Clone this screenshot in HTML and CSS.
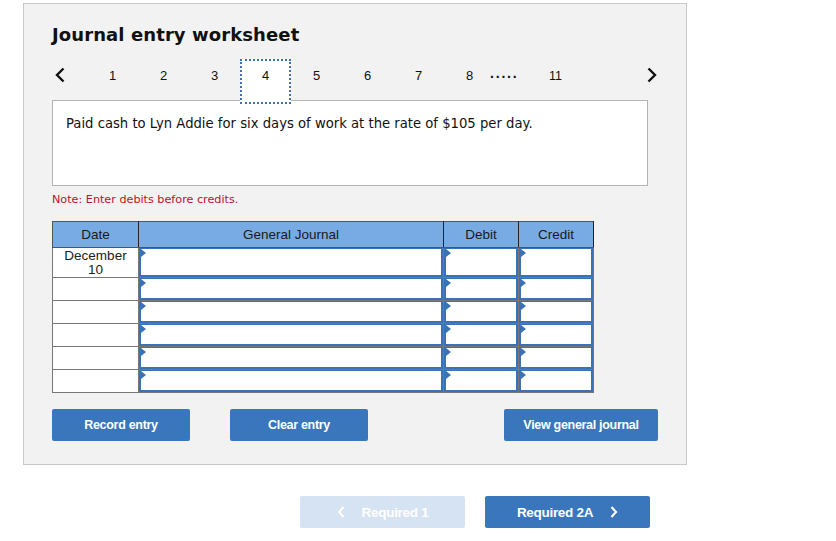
FILE: index.html
```html
<!DOCTYPE html>
<html>
<head>
<meta charset="utf-8">
<link rel="stylesheet" href="styles.css">
</head>
<body>
<div class="panel">
  <h1 class="title">Journal entry worksheet</h1>
  <div class="nav">
    <div class="nav-arrow prev"><svg width="12" height="16" viewBox="0 0 12 16"><path d="M9.5 1.5 L3 8 L9.5 14.5" fill="none" stroke="#111" stroke-width="2.4"/></svg></div>
    <div class="nav-item">1</div>
    <div class="nav-item">2</div>
    <div class="nav-item">3</div>
    <div class="nav-item active">4</div>
    <div class="nav-item">5</div>
    <div class="nav-item">6</div>
    <div class="nav-item">7</div>
    <div class="nav-item">8</div>
    <div class="nav-dots">.....</div>
    <div class="nav-item eleven">11</div>
    <div class="nav-arrow next"><svg width="12" height="16" viewBox="0 0 12 16"><path d="M2.5 1.5 L9 8 L2.5 14.5" fill="none" stroke="#111" stroke-width="2.4"/></svg></div>
  </div>
  <div class="desc">Paid cash to Lyn Addie for six days of work at the rate of $105 per day.</div>
  <p class="note">Note: Enter debits before credits.</p>
  <table class="journal">
    <thead>
      <tr><th class="c-date">Date</th><th class="c-gj">General Journal</th><th class="c-num">Debit</th><th class="c-num">Credit</th></tr>
    </thead>
    <tbody>
      <tr class="first"><td class="date">December<br>10</td><td><div class="inp"></div></td><td><div class="inp"></div></td><td><div class="inp"></div></td></tr>
      <tr><td class="date"></td><td><div class="inp"></div></td><td><div class="inp"></div></td><td><div class="inp"></div></td></tr>
      <tr><td class="date"></td><td><div class="inp"></div></td><td><div class="inp"></div></td><td><div class="inp"></div></td></tr>
      <tr><td class="date"></td><td><div class="inp"></div></td><td><div class="inp"></div></td><td><div class="inp"></div></td></tr>
      <tr><td class="date"></td><td><div class="inp"></div></td><td><div class="inp"></div></td><td><div class="inp"></div></td></tr>
      <tr><td class="date"></td><td><div class="inp"></div></td><td><div class="inp"></div></td><td><div class="inp"></div></td></tr>
    </tbody>
  </table>
  <div class="actions">
    <button class="btn record">Record entry</button>
    <button class="btn clear">Clear entry</button>
    <button class="btn view">View general journal</button>
  </div>
</div>
<div class="bottom">
  <button class="req disabled"><svg class="chev" width="8" height="12" viewBox="0 0 8 12"><path d="M6.5 1 L2 6 L6.5 11" fill="none" stroke="#fff" stroke-width="2.2"/></svg>Required 1</button>
  <button class="req primary">Required 2A<svg class="chev r" width="8" height="12" viewBox="0 0 8 12"><path d="M1.5 1 L6 6 L1.5 11" fill="none" stroke="#fff" stroke-width="2.2"/></svg></button>
</div>
</body>
</html>
```

FILE: styles.css
```css
* { box-sizing: border-box; }
html, body { margin: 0; padding: 0; background: #fff; }
body { font-family: "Liberation Sans", Arial, sans-serif; color: #111; }

.panel {
  margin: 3px 0 0 23px;
  width: 664px;
  height: 462px;
  background: #f2f2f2;
  border: 1px solid #c8c8c8;
  padding: 0 0 0 28px;
}

.title {
  font-family: "DejaVu Sans", Verdana, sans-serif;
  font-weight: bold;
  font-size: 18px;
  line-height: 24px;
  margin: 0;
  padding-top: 19px;
  height: 55px;
  letter-spacing: 0.1px;
}

.nav {
  display: flex;
  align-items: flex-start;
  height: 41px;
  width: 606px;
  font-size: 13px;
}
.nav-arrow { height: 41px; padding-top: 8px; }
.nav-arrow.prev { width: 35px; padding-left: 2px; }
.nav-arrow.next { margin-left: auto; }
.nav-item {
  width: 51px;
  height: 41px;
  text-align: center;
  padding-top: 9px;
  line-height: 16px;
}
.nav-item.active {
  height: 45px;
  margin-bottom: -4px;
  background: #fff;
  border: 2px dotted #3a72b5;
  padding-top: 7px;
  position: relative;
  z-index: 1;
}
.nav-dots {
  width: 25px;
  margin-left: -5px;
  padding-top: 6px;
  letter-spacing: 1.8px;
  font-size: 14px;
  line-height: 16px;
  font-weight: bold;
}
.nav-item.eleven { margin-left: 15px; font-size: 12.5px; }

.desc {
  width: 596px;
  height: 86px;
  background: #fff;
  border: 1px solid #b4b4b4;
  font-family: "DejaVu Sans", Verdana, sans-serif;
  font-size: 13.2px;
  padding: 15px 0 0 13px;
  line-height: 16px;
}

.note {
  margin: 0;
  padding-top: 7px;
  height: 35px;
  font-family: "DejaVu Sans", Verdana, sans-serif;
  font-size: 11.2px;
  line-height: 14px;
  color: #c0102a;
}

.journal {
  border-collapse: collapse;
  width: 541px;
  table-layout: fixed;
  font-size: 13.5px;
}
.journal th {
  background: #78abe3;
  font-weight: normal;
  color: #1a1a1a;
  height: 26px;
  border: 1px solid #555;
  border-right-color: #222;
  padding: 0;
  line-height: 16px;
}
.c-date { width: 86px; }
.c-gj { width: 305px; }
.c-num { width: 75px; }
.journal td {
  border: 1px solid #777;
  padding: 0;
  height: 23px;
  background: #fff;
  vertical-align: top;
}
.journal tr.first td { height: 30px; }
.journal td.date {
  text-align: center;
  font-size: 13.5px;
  line-height: 14px;
  padding-top: 1px;
  color: #222;
}
.inp {
  position: relative;
  height: 22px;
  border: 2px solid #3a72b5;
  border-top-width: 1px;
  background: #fff;
}
.journal tr.first td .inp { height: 29px; }
.inp::before {
  content: "";
  position: absolute;
  left: 0;
  top: 0;
  border-top: 4px solid transparent;
  border-bottom: 4px solid transparent;
  border-left: 5px solid #3a72b5;
}

.actions {
  display: flex;
  margin-top: 16px;
}
.btn {
  height: 32px;
  background: #3a76bb;
  color: #fff;
  border: none;
  border-radius: 2px;
  font-family: "Liberation Sans", Arial, sans-serif;
  font-weight: bold;
  font-size: 12.5px;
  padding: 0;
  letter-spacing: -0.3px;
}
.btn.record { width: 138px; }
.btn.clear { width: 138px; margin-left: 40px; }
.btn.view { width: 154px; margin-left: 136px; }

.bottom {
  display: flex;
  margin: 31px 0 0 300px;
}
.req {
  width: 165px;
  height: 32px;
  border: none;
  border-radius: 2px;
  color: #fff;
  font-family: "Liberation Sans", Arial, sans-serif;
  font-weight: bold;
  font-size: 13.5px;
  padding: 0;
  display: flex;
  align-items: center;
  justify-content: center;
  letter-spacing: -0.3px;
}
.req.disabled { background: #d6e3f2; }
.req.primary { background: #3a76bb; margin-left: 20px; }
.chev { margin-right: 17px; }
.chev.r { margin-right: 0; margin-left: 17px; }
```
